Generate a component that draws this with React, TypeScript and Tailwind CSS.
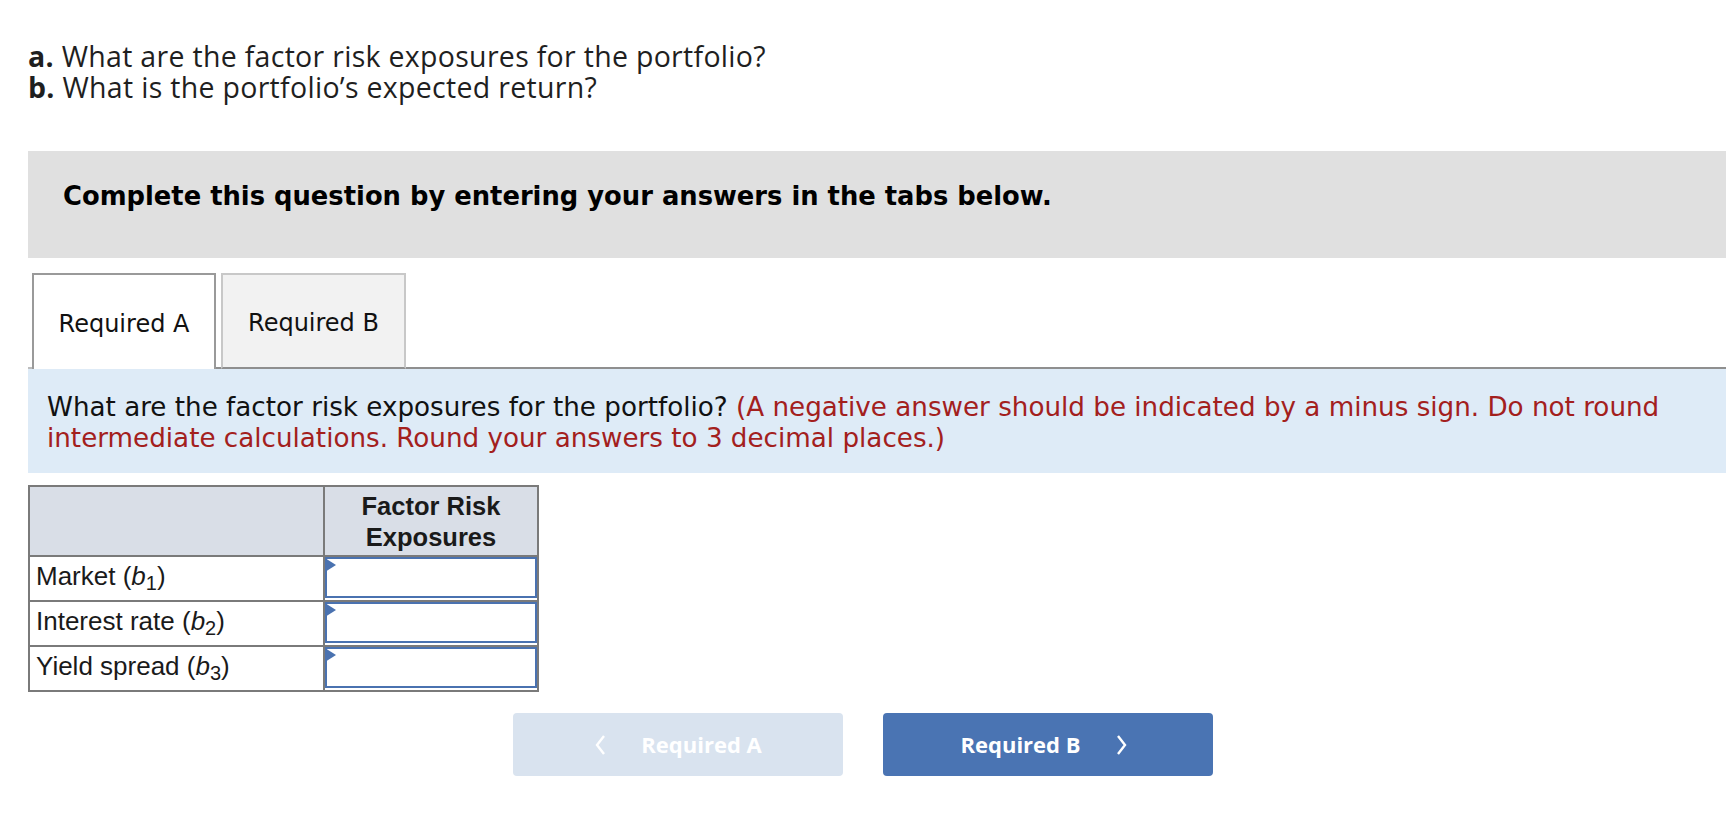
import React from "react";

function Caret() {
  return (
    <svg width="11" height="14" viewBox="0 0 11 14" className="block">
      <polygon points="0,0 11,7 0,14" fill="#4a72b0" />
    </svg>
  );
}

function InputCell() {
  return (
    <td className="border-2 border-[#7a7a7a] p-0 align-top">
      <div className="relative h-[41px] border-2 border-[#4a72b0] bg-white">
        <div className="absolute left-[-2px] top-[-1px]">
          <Caret />
        </div>
      </div>
    </td>
  );
}

function Row({ label, sub }: { label: string; sub: string }) {
  return (
    <tr>
      <td
        className="border-2 border-[#7a7a7a] pl-[6px] pb-[5px] h-[45px] text-[26px] leading-[28px] text-[#1a1a1a]"
        style={{ fontFamily: '"Liberation Sans", Arial, sans-serif' }}
      >
        {label} (<i>b</i>
        <sub className="text-[20px]">{sub}</sub>)
      </td>
      <InputCell />
    </tr>
  );
}

export default function App() {
  const verdana = { fontFamily: '"DejaVu Sans", Verdana, sans-serif' };
  const proxima = { fontFamily: '"Open Sans", "Noto Sans", sans-serif' };
  return (
    <div className="min-h-screen bg-white pl-[28px]">
      <div className="pt-[41px] text-[28.5px] leading-[31px] tracking-[0.3px] text-[#1f1f1f]" style={proxima}>
        <div>
          <span className="font-bold">a.</span> What are the factor risk exposures for the portfolio?
        </div>
        <div>
          <span className="font-bold">b.</span> What is the portfolio’s expected return?
        </div>
      </div>

      <div className="mt-[48px] h-[107px] bg-[#e0e0e0] pl-[35px] pt-[30px]">
        <div className="text-[25.8px] leading-[31px] font-bold text-black" style={verdana}>
          Complete this question by entering your answers in the tabs below.
        </div>
      </div>

      <div className="mt-[15px] flex h-[96px] items-stretch" style={verdana}>
        <div className="w-[4px] border-b-2 border-[#bdbdbd]" />
        <div className="flex w-[184px] items-center justify-center border-x-2 border-t-2 border-[#9a9a9a] bg-white pt-[3px] text-[24px] text-[#111]">
          Required A
        </div>
        <div className="w-[5px] border-b-2 border-[#8f8f8f]" />
        <div className="flex w-[185px] items-center justify-center border-x-2 border-t-2 border-b-2 border-x-[#c8c8c8] border-t-[#c8c8c8] border-b-[#8f8f8f] bg-[#f2f2f2] pt-[3px] text-[24px] text-[#111]">
          Required B
        </div>
        <div className="flex-1 border-b-2 border-[#8f8f8f]" />
      </div>

      <div className="h-[104px] bg-[#deebf7] pl-[19px] pt-[23px] text-[26.2px] leading-[31px]" style={verdana}>
        <span className="text-[#111]">What are the factor risk exposures for the portfolio? </span>
        <span className="text-[#a3201d]">
          (A negative answer should be indicated by a minus sign. Do not round
          <br />
          intermediate calculations. Round your answers to 3 decimal places.)
        </span>
      </div>

      <table className="mt-[12px] border-collapse border-2 border-[#7a7a7a]">
        <thead>
          <tr>
            <th className="w-[295px] h-[70px] border-2 border-[#7a7a7a] bg-[#d9dee7]" />
            <th
              className="w-[214px] h-[70px] border-2 border-[#7a7a7a] bg-[#d9dee7] text-center align-top pt-[4px] text-[25.5px] leading-[31px] font-bold text-[#1a1a1a]"
              style={{ fontFamily: '"Liberation Sans", Arial, sans-serif' }}
            >
              Factor Risk
              <br />
              Exposures
            </th>
          </tr>
        </thead>
        <tbody>
          <Row label="Market" sub="1" />
          <Row label="Interest rate" sub="2" />
          <Row label="Yield spread" sub="3" />
        </tbody>
      </table>

      <div className="mt-[21px] flex justify-center gap-[40px] pr-[28px]" style={proxima}>
        <button className="flex h-[63px] w-[330px] items-center justify-center gap-[35px] rounded-[4px] bg-[#d9e3ef] text-[22px] font-bold text-white">
          <svg width="12" height="22" viewBox="0 0 12 22" fill="none" stroke="white" strokeWidth="2.4">
            <polyline points="10,2 3,11 10,20" />
          </svg>
          <span>Required A</span>
        </button>
        <button className="flex h-[63px] w-[330px] items-center justify-center gap-[35px] rounded-[4px] bg-[#4a74b3] pr-[8px] text-[22px] font-bold text-white">
          <span>Required B</span>
          <svg width="12" height="22" viewBox="0 0 12 22" fill="none" stroke="white" strokeWidth="2.4">
            <polyline points="2,2 9,11 2,20" />
          </svg>
        </button>
      </div>
    </div>
  );
}
